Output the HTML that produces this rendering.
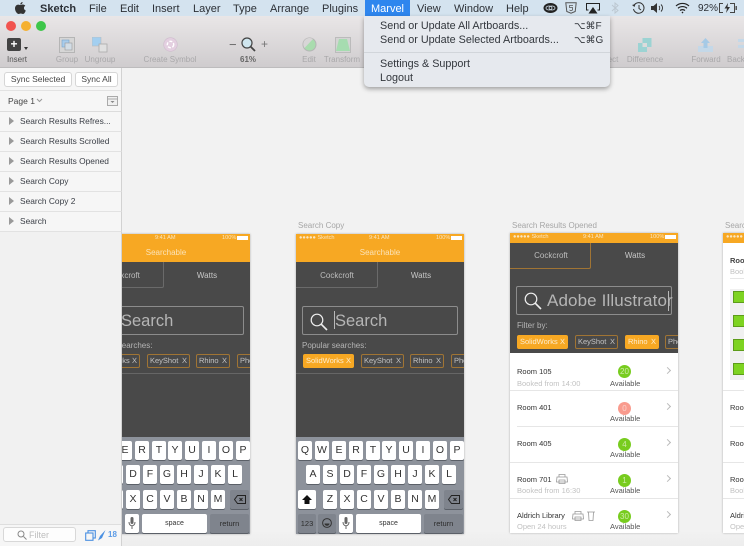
<!DOCTYPE html>
<html><head><meta charset="utf-8"><style>
*{box-sizing:border-box;margin:0;padding:0}
html,body{width:744px;height:546px;overflow:hidden;background:#f2f2f2;font-family:"Liberation Sans",sans-serif}
#root{position:absolute;left:0;top:0;width:744px;height:546px;overflow:hidden;filter:blur(.35px);background:linear-gradient(#f2f2f2 0,#f2f2f2 530px,#ededed 546px)}
.a,.t{position:absolute;white-space:nowrap}
.mb{position:absolute;top:3px;font-size:11px;line-height:12px;color:#2c3036}
.tb{position:absolute;top:55px;font-size:8px;line-height:10px;color:#a9a8aa;transform:translateX(-50%);white-space:nowrap}
.row{position:absolute;left:0;width:122px;height:20px;border-bottom:1px solid #e2e2e2;border-right:1px solid #d2d2d2;background:#f6f6f6;font-size:8.4px;line-height:19px;padding-left:20px;color:#3c4048}
.row:before{content:"";position:absolute;left:9px;top:5px;border-left:5px solid #9a9a9a;border-top:4px solid transparent;border-bottom:4px solid transparent}
.ph{position:absolute;top:234px;width:168px;height:300px;background:#494949;box-shadow:0 0 2px rgba(0,0,0,.3);overflow:hidden}
.st{position:absolute;left:0;top:0;width:168px;height:10px;font-size:5.6px;line-height:9px;color:#fbe6c0;background:#f7a823}
.tag{position:absolute;height:14px;border:1px solid #a07434;border-radius:2px;font-size:7.5px;text-rendering:geometricPrecision;line-height:12px;color:#c3c3c3;padding-left:2px;overflow:hidden;white-space:nowrap}
.tag i{position:absolute;right:2px;top:0;font-style:normal}
.tag.on{background:#f7a823;border-color:#f7a823;color:#fdeccd}
.k{position:absolute;width:14px;height:19px;background:#fff;border-radius:2px;box-shadow:0 1px 0 #5b6068;font-size:10.5px;line-height:19px;text-align:center;color:#333}
.k.d{background:#7f848d;color:#2c2c2c}
.kb{position:absolute;left:0;top:203px;width:168px;height:97px;background:#8d929b}
.rm{position:absolute;left:7px;font-size:7.5px;color:#333;white-space:nowrap;line-height:10px}
.sub{position:absolute;left:7px;font-size:7.5px;color:#c2c2c2;white-space:nowrap;line-height:10px}
.av{position:absolute;left:100px;width:30px;text-align:center;font-size:7.5px;color:#555;line-height:10px}
.dot{position:absolute;left:108px;width:13px;height:13px;border-radius:50%;background:#78cc1f;color:#cdeca8;font-size:8px;line-height:13px;text-align:center}
.chev{position:absolute;left:155px;width:5px;height:5px;border-top:1px solid #bbb;border-right:1px solid #bbb;transform:rotate(45deg)}
.ln{position:absolute;height:1px;background:#e6e6e6}
.lb{position:absolute;top:221px;font-size:8px;line-height:10px;color:#a6a6a6;white-space:nowrap}
.sq{position:absolute;left:10px;width:14px;height:12px;background:#7ed321;border:1px solid #5d9c1a}
.mi{position:absolute;left:16px;font-size:10.8px;line-height:13px;color:#33373d;white-space:nowrap}
.sc{position:absolute;font-size:10px;line-height:13px;color:#33373d;white-space:nowrap}
</style></head><body><div id="root">

<div class="lb" style="left:298px">Search Copy</div>
<div class="lb" style="left:512px">Search Results Opened</div>
<div class="lb" style="left:725px">Search Results Scrolled</div>

<!-- phone 1 -->
<div class="ph" style="left:82px">
<div class="a" style="left:0;top:0;width:168px;height:28px;background:#f7a823"></div>
<div class="st"><span class="t" style="left:3px">●●●●● Sketch</span><span class="t" style="left:73px">9:41 AM</span><span class="t" style="left:140px">100%</span><span class="a" style="left:155px;top:2px;width:11px;height:4px;background:#fff"></span></div>
<div class="t" style="left:0;width:168px;text-align:center;top:14px;font-size:8px;line-height:10px;color:#fbe3b8">Searchable</div>
<div class="a" style="left:0;top:28px;width:82px;height:26px;border-right:1px solid #6a6a6a;border-bottom:1px solid #6a6a6a;border-radius:0 0 2px 0"></div>
<div class="t" style="left:0;width:82px;text-align:center;top:37px;font-size:8px;line-height:10px;color:#bdbdbd">Cockcroft</div>
<div class="t" style="left:82px;width:86px;text-align:center;top:37px;font-size:8px;line-height:10px;color:#c8c8c8">Watts</div>
<div class="a" style="left:6px;top:72px;width:156px;height:29px;border:1px solid #8c8c8c;border-radius:2px"></div>
<div class="t" style="left:39px;top:78px;font-size:16.5px;line-height:19px;color:#b5b5b5">Search</div>
<div class="t" style="left:6px;top:107px;font-size:8px;line-height:10px;color:#b5b5b5">Popular searches:</div>
<div class="tag" style="left:7px;top:120px;width:51px">SolidWorks<i>X</i></div>
<div class="tag" style="left:65px;top:120px;width:43px">KeyShot<i>X</i></div>
<div class="tag" style="left:114px;top:120px;width:34px">Rhino<i>X</i></div>
<div class="tag" style="left:155px;top:120px;width:30px">Photo</div>
<div class="a" style="left:0;top:139px;width:168px;height:1px;background:#666"></div>
<div class="kb">
<div class="k" style="left:2px;top:4px">Q</div><div class="k" style="left:19px;top:4px">W</div><div class="k" style="left:36px;top:4px">E</div><div class="k" style="left:53px;top:4px">R</div><div class="k" style="left:70px;top:4px">T</div><div class="k" style="left:86px;top:4px">Y</div><div class="k" style="left:103px;top:4px">U</div><div class="k" style="left:120px;top:4px">I</div><div class="k" style="left:137px;top:4px">O</div><div class="k" style="left:154px;top:4px">P</div>
<div class="k" style="left:10px;top:28px">A</div><div class="k" style="left:27px;top:28px">S</div><div class="k" style="left:44px;top:28px">D</div><div class="k" style="left:61px;top:28px">F</div><div class="k" style="left:78px;top:28px">G</div><div class="k" style="left:95px;top:28px">H</div><div class="k" style="left:112px;top:28px">J</div><div class="k" style="left:129px;top:28px">K</div><div class="k" style="left:146px;top:28px">L</div>
<div class="k" style="left:27px;top:53px">Z</div><div class="k" style="left:44px;top:53px">X</div><div class="k" style="left:61px;top:53px">C</div><div class="k" style="left:78px;top:53px">V</div><div class="k" style="left:95px;top:53px">B</div><div class="k" style="left:112px;top:53px">N</div><div class="k" style="left:129px;top:53px">M</div>
<div class="k d" style="left:148px;top:53px;width:19px"><svg width="12" height="9" viewBox="0 0 12 9" style="margin-top:5px;display:block;margin-left:3.500px"><path d="M3.500.500h8v8h-8L.500 4.500zM5.500 3l3 3M8.500 3l-3 3" fill="none" stroke="#222"/></svg></div>
<div class="k" style="left:43px;top:77px"><svg width="8" height="14" viewBox="0 0 8 14" style="margin-top:3px"><rect x="2.500" y="0" width="3" height="7" rx="1.500" fill="#666"/><path d="M1 5c0 5 6 5 6 0M4 9v3" stroke="#666" fill="none"/></svg></div>
<div class="k" style="left:60px;top:77px;width:65px;font-size:7px">space</div>
<div class="k d" style="left:128px;top:77px;width:39px;font-size:7.5px">return</div>
</div>
</div>

<!-- phone 2 -->
<div class="ph" style="left:296px">
<div class="a" style="left:0;top:0;width:168px;height:28px;background:#f7a823"></div>
<div class="st"><span class="t" style="left:3px">●●●●● Sketch</span><span class="t" style="left:73px">9:41 AM</span><span class="t" style="left:140px">100%</span><span class="a" style="left:155px;top:2px;width:11px;height:4px;background:#fff"></span></div>
<div class="t" style="left:0;width:168px;text-align:center;top:14px;font-size:8px;line-height:10px;color:#fbe3b8">Searchable</div>
<div class="a" style="left:0;top:28px;width:82px;height:26px;border-right:1px solid #6a6a6a;border-bottom:1px solid #6a6a6a;border-radius:0 0 2px 0"></div>
<div class="t" style="left:0;width:82px;text-align:center;top:37px;font-size:8px;line-height:10px;color:#bdbdbd">Cockcroft</div>
<div class="t" style="left:82px;width:86px;text-align:center;top:37px;font-size:8px;line-height:10px;color:#c8c8c8">Watts</div>
<div class="a" style="left:6px;top:72px;width:156px;height:29px;border:1px solid #8c8c8c;border-radius:2px"></div>
<svg class="a" style="left:14px;top:79px" width="18" height="18" viewBox="0 0 18 18"><circle cx="7" cy="7" r="5.800" fill="none" stroke="#eee" stroke-width="1.200"/><path d="M11.200 11.200L17 17" stroke="#eee" stroke-width="1.600"/></svg>
<div class="a" style="left:38px;top:77px;width:1px;height:18px;background:#b9b9b9"></div>
<div class="t" style="left:39px;top:78px;font-size:16.500px;line-height:19px;color:#b5b5b5">Search</div>
<div class="t" style="left:6px;top:107px;font-size:8px;line-height:10px;color:#b5b5b5">Popular searches:</div>
<div class="tag on" style="left:7px;top:120px;width:51px">SolidWorks<i>X</i></div>
<div class="tag" style="left:65px;top:120px;width:43px">KeyShot<i>X</i></div>
<div class="tag" style="left:114px;top:120px;width:34px">Rhino<i>X</i></div>
<div class="tag" style="left:155px;top:120px;width:30px">Photo</div>
<div class="a" style="left:0;top:139px;width:168px;height:1px;background:#666"></div>
<div class="kb">
<div class="k" style="left:2px;top:4px">Q</div><div class="k" style="left:19px;top:4px">W</div><div class="k" style="left:36px;top:4px">E</div><div class="k" style="left:53px;top:4px">R</div><div class="k" style="left:70px;top:4px">T</div><div class="k" style="left:86px;top:4px">Y</div><div class="k" style="left:103px;top:4px">U</div><div class="k" style="left:120px;top:4px">I</div><div class="k" style="left:137px;top:4px">O</div><div class="k" style="left:154px;top:4px">P</div>
<div class="k" style="left:10px;top:28px">A</div><div class="k" style="left:27px;top:28px">S</div><div class="k" style="left:44px;top:28px">D</div><div class="k" style="left:61px;top:28px">F</div><div class="k" style="left:78px;top:28px">G</div><div class="k" style="left:95px;top:28px">H</div><div class="k" style="left:112px;top:28px">J</div><div class="k" style="left:129px;top:28px">K</div><div class="k" style="left:146px;top:28px">L</div>
<div class="k" style="left:2px;top:53px;width:18px"><svg width="10" height="10" viewBox="0 0 10 10" style="margin-top:5px;display:block;margin-left:4px"><path d="M5 0L10 5H7.500V9H2.500V5H0Z" fill="#111"/></svg></div>
<div class="k" style="left:27px;top:53px">Z</div><div class="k" style="left:44px;top:53px">X</div><div class="k" style="left:61px;top:53px">C</div><div class="k" style="left:78px;top:53px">V</div><div class="k" style="left:95px;top:53px">B</div><div class="k" style="left:112px;top:53px">N</div><div class="k" style="left:129px;top:53px">M</div>
<div class="k d" style="left:148px;top:53px;width:19px"><svg width="12" height="9" viewBox="0 0 12 9" style="margin-top:5px;display:block;margin-left:3.500px"><path d="M3.500.500h8v8h-8L.500 4.500zM5.500 3l3 3M8.500 3l-3 3" fill="none" stroke="#222"/></svg></div>
<div class="k d" style="left:2px;top:77px;width:18px;font-size:7.500px">123</div>
<div class="k d" style="left:22px;top:77px;width:18px"><svg width="10" height="10" viewBox="0 0 10 10" style="margin-top:4px"><circle cx="5" cy="5" r="4.400" fill="none" stroke="#333"/><path d="M2.500 5.500h5c0 3-5 3-5 0z" fill="#333"/></svg></div>
<div class="k" style="left:43px;top:77px"><svg width="8" height="14" viewBox="0 0 8 14" style="margin-top:3px"><rect x="2.500" y="0" width="3" height="7" rx="1.500" fill="#666"/><path d="M1 5c0 5 6 5 6 0M4 9v3" stroke="#666" fill="none"/></svg></div>
<div class="k" style="left:60px;top:77px;width:65px;font-size:7px">space</div>
<div class="k d" style="left:128px;top:77px;width:39px;font-size:7.500px">return</div>
</div>
</div>

<!-- phone 3 -->
<div class="ph" style="left:510px;top:233px;background:#fff">
<div class="a" style="left:0;top:0;width:168px;height:120px;background:#494949"></div>
<div class="st"><span class="t" style="left:3px">●●●●● Sketch</span><span class="t" style="left:73px">9:41 AM</span><span class="t" style="left:140px">100%</span><span class="a" style="left:155px;top:2px;width:11px;height:4px;background:#fff"></span></div>
<div class="a" style="left:0;top:10px;width:81px;height:26px;border-right:1px solid #a07434;border-bottom:1px solid #a07434;border-radius:0 0 2px 0"></div>
<div class="t" style="left:0;width:82px;text-align:center;top:18px;font-size:8px;line-height:10px;color:#bdbdbd">Cockcroft</div>
<div class="t" style="left:82px;width:86px;text-align:center;top:18px;font-size:8px;line-height:10px;color:#c8c8c8">Watts</div>
<div class="a" style="left:6px;top:53px;width:156px;height:29px;border:1px solid #8c8c8c;border-radius:2px"></div>
<svg class="a" style="left:14px;top:59px" width="18" height="18" viewBox="0 0 18 18"><circle cx="7" cy="7" r="5.800" fill="none" stroke="#eee" stroke-width="1.200"/><path d="M11.200 11.200L17 17" stroke="#eee" stroke-width="1.600"/></svg>
<div class="t" style="left:37px;top:58px;font-size:17px;line-height:20px;letter-spacing:.12px;color:#b5b5b5">Adobe Illustrator</div>
<div class="a" style="left:158px;top:58px;width:1px;height:20px;background:#b9b9b9"></div>
<div class="t" style="left:7px;top:88px;font-size:8px;line-height:10px;color:#b5b5b5">Filter by:</div>
<div class="tag on" style="left:7px;top:102px;width:51px">SolidWorks<i>X</i></div>
<div class="tag" style="left:65px;top:102px;width:43px">KeyShot<i>X</i></div>
<div class="tag on" style="left:115px;top:102px;width:34px">Rhino<i>X</i></div>
<div class="tag" style="left:155px;top:102px;width:30px">Photo</div>
<div class="rm" style="top:134px">Room 105</div><div class="sub" style="top:146px">Booked from 14:00</div>
<div class="dot" style="top:132px">20</div><div class="av" style="top:146px">Available</div><div class="chev" style="top:135px"></div>
<div class="ln" style="left:0;top:157px;width:168px"></div>
<div class="rm" style="top:170px">Room 401</div>
<div class="dot" style="top:169px;background:#f99b8e;color:#fbd3cc">0</div><div class="av" style="top:181px">Available</div><div class="chev" style="top:171px"></div>
<div class="ln" style="left:7px;top:193px;width:161px"></div>
<div class="rm" style="top:206px">Room 405</div>
<div class="dot" style="top:205px">4</div><div class="av" style="top:217px">Available</div><div class="chev" style="top:207px"></div>
<div class="ln" style="left:0;top:229px;width:168px"></div>
<div class="rm" style="top:242px">Room 701</div><div class="sub" style="top:253px">Booked from 16:30</div>
<svg class="a" style="left:46px;top:241px" width="12" height="10" viewBox="0 0 12 10"><path d="M3 3V.500h6V3M1 3h10l.500 5H.500zM3 6h6v3.500H3z" fill="none" stroke="#999" stroke-width=".8"/></svg>
<div class="dot" style="top:241px">1</div><div class="av" style="top:253px">Available</div><div class="chev" style="top:243px"></div>
<div class="ln" style="left:0;top:265px;width:168px"></div>
<div class="rm" style="top:278px">Aldrich Library</div><div class="sub" style="top:289px">Open 24 hours</div>
<svg class="a" style="left:62px;top:278px" width="12" height="10" viewBox="0 0 12 10"><path d="M3 3V.500h6V3M1 3h10l.500 5H.500zM3 6h6v3.500H3z" fill="none" stroke="#999" stroke-width=".8"/></svg>
<svg class="a" style="left:77px;top:278px" width="8" height="10" viewBox="0 0 8 10"><path d="M0 1h8M1.500 1l.500 8.500h4l.500-8.500" fill="none" stroke="#999" stroke-width=".8"/></svg>
<div class="dot" style="top:277px">30</div><div class="av" style="top:289px">Available</div><div class="chev" style="top:279px"></div>
</div>

<!-- phone 4 -->
<div class="ph" style="left:723px;top:233px;background:#fff">
<div class="st"><span class="t" style="left:3px">●●●●● Sketch</span></div>
<div class="rm" style="top:23px;font-weight:bold;color:#444">Room 105</div><div class="sub" style="top:34px">Booked from 14:00</div>
<div class="ln" style="left:7px;top:45px;width:161px"></div>
<div class="a" style="left:7px;top:56px;width:160px;height:91px;background:#f0f0f0"></div>
<div class="sq" style="top:58px"></div><div class="sq" style="top:82px"></div><div class="sq" style="top:106px"></div><div class="sq" style="top:130px"></div>
<div class="ln" style="left:0;top:157px;width:168px"></div>
<div class="rm" style="top:170px">Room 401</div><div class="ln" style="left:7px;top:193px;width:161px"></div>
<div class="rm" style="top:206px">Room 405</div><div class="ln" style="left:0;top:229px;width:168px"></div>
<div class="rm" style="top:242px">Room 701</div><div class="sub" style="top:253px">Booked</div><div class="ln" style="left:0;top:265px;width:168px"></div>
<div class="rm" style="top:278px">Aldrich</div><div class="sub" style="top:289px">Open</div>
</div>

<!-- sidebar -->
<div class="a" style="left:0;top:68px;width:122px;height:478px;background:#f1f1f1;border-right:1px solid #d2d2d2">
<div class="a" style="left:0;top:0;width:121px;height:23px;background:#f6f6f6;border-bottom:1px solid #e2e2e2"></div>
<div class="a" style="left:4px;top:4px;width:68px;height:15px;background:#fff;border:1px solid #d6d6d6;border-radius:3px;font-size:8.500px;line-height:13px;text-align:center;color:#444">Sync Selected</div>
<div class="a" style="left:75px;top:4px;width:43px;height:15px;background:#fff;border:1px solid #d6d6d6;border-radius:3px;font-size:8.500px;line-height:13px;text-align:center;color:#444">Sync All</div>
<div class="a" style="left:0;top:23px;width:121px;height:21px;background:#f6f6f6;border-bottom:1px solid #dcdcdc"></div>
<div class="t" style="left:8px;top:28px;font-size:8.500px;line-height:10px;color:#444">Page 1</div>
<svg class="a" style="left:36px;top:30px" width="7" height="5" viewBox="0 0 7 5"><path d="M1 1l2.500 2.500L6 1" fill="none" stroke="#999"/></svg>
<svg class="a" style="left:107px;top:28px" width="11" height="10" viewBox="0 0 11 10"><rect x=".5" y=".5" width="10" height="9" fill="#f0f0f0" stroke="#aaa"/><path d="M0 3h11" stroke="#aaa"/><path d="M3.500 5h4L5.500 7z" fill="#888"/></svg>
</div>
<div class="row" style="top:112px">Search Results Refres...</div>
<div class="row" style="top:132px">Search Results Scrolled</div>
<div class="row" style="top:152px">Search Results Opened</div>
<div class="row" style="top:172px">Search Copy</div>
<div class="row" style="top:192px">Search Copy 2</div>
<div class="row" style="top:212px">Search</div>
<div class="a" style="left:0;top:524px;width:122px;height:22px;background:#f6f6f6;border-top:1px solid #dedede;border-right:1px solid #d2d2d2"></div>
<div class="a" style="left:3px;top:527px;width:73px;height:15px;background:#fdfdfd;border:1px solid #d8d8d8;border-radius:3px"></div>
<svg class="a" style="left:17px;top:530px" width="10" height="10" viewBox="0 0 10 10"><circle cx="4" cy="4" r="3" fill="none" stroke="#888"/><path d="M6.500 6.500L9.500 9.500" stroke="#888"/></svg>
<div class="t" style="left:29px;top:530px;font-size:9px;line-height:10px;color:#bdbdbd">Filter</div>
<svg class="a" style="left:85px;top:530px" width="11" height="11" viewBox="0 0 11 11"><rect x="3" y=".7" width="7.300" height="7.300" fill="none" stroke="#4a90e2" stroke-width="1.100"/><rect x=".7" y="3" width="7.300" height="7.300" fill="#f6f6f6" stroke="#4a90e2" stroke-width="1.100"/></svg>
<svg class="a" style="left:97px;top:530px" width="9" height="11" viewBox="0 0 9 11"><path d="M8.500 0L3 6 1 10.500 5 8z" fill="#4a90e2"/></svg>
<div class="t" style="left:108px;top:530px;font-size:8px;line-height:10px;font-weight:bold;color:#5b9be6">18</div>

<!-- toolbar -->
<div class="a" style="left:0;top:16px;width:744px;height:52px;background:linear-gradient(#e9e6e7,#cfccce);border-bottom:1px solid #bdbcbd"></div>
<div class="a" style="left:6px;top:20.500px;width:10px;height:10px;border-radius:50%;background:#f1534e"></div>
<div class="a" style="left:20.500px;top:20.500px;width:10px;height:10px;border-radius:50%;background:#f5b030"></div>
<div class="a" style="left:35.500px;top:20.500px;width:10px;height:10px;border-radius:50%;background:#3ec64a"></div>
<div class="a" style="left:7px;top:38px;width:14px;height:13px;background:#434343;border-radius:2px;color:#fff;font-size:12px;line-height:12px;text-align:center;font-weight:bold">+</div>
<div class="a" style="left:24px;top:47px;border-top:3px solid #333;border-left:2px solid transparent;border-right:2px solid transparent"></div>
<div class="tb" style="left:17px;color:#555">Insert</div>
<svg class="a" style="left:59px;top:37px" width="16" height="16" viewBox="0 0 16 16"><rect x=".5" y=".5" width="15" height="15" fill="#d6d6d6" stroke="#b5b5b5"/><rect x="3" y="3" width="7" height="7" fill="#a8ccec" stroke="#7ba3c8" stroke-width=".6"/><rect x="6" y="6" width="7" height="7" fill="#d2dde6" stroke="#999" stroke-width=".6"/></svg>
<div class="tb" style="left:67px">Group</div>
<svg class="a" style="left:92px;top:37px" width="16" height="16" viewBox="0 0 16 16"><rect x="0" y="0" width="9" height="9" fill="#a3cff0" stroke="#bbb" stroke-width=".6"/><rect x="7" y="7" width="8" height="8" fill="#e0e0e0" stroke="#aaa" stroke-width=".8"/></svg>
<div class="tb" style="left:100px">Ungroup</div>
<svg class="a" style="left:163px;top:37px" width="15" height="15" viewBox="0 0 15 15"><circle cx="7.500" cy="7.500" r="6.800" fill="#e3cfe0" stroke="#cfbccd" stroke-width=".6"/><circle cx="7.500" cy="7.500" r="3.200" fill="none" stroke="#fff" stroke-width="1.400" stroke-dasharray="3 1.500"/></svg>
<div class="tb" style="left:170px">Create Symbol</div>
<div class="t" style="left:229px;top:38px;font-size:13px;line-height:13px;color:#666">−</div>
<svg class="a" style="left:241px;top:37px" width="15" height="15" viewBox="0 0 15 15"><circle cx="6" cy="6" r="5" fill="#cfe5ee" stroke="#444" stroke-width="1.200"/><path d="M9.500 9.500L14 14" stroke="#444" stroke-width="1.800"/></svg>
<div class="t" style="left:261px;top:38px;font-size:12px;line-height:13px;color:#777">+</div>
<div class="tb" style="left:248px;font-weight:bold;color:#666">61%</div>
<svg class="a" style="left:302px;top:37px" width="15" height="15" viewBox="0 0 15 15"><circle cx="7.500" cy="7.500" r="6.500" fill="#a9dcae" stroke="#b5b5b5"/><path d="M2.800 3A6.500 6.500 0 0 1 11 2L2.500 11A6.500 6.500 0 0 1 2.800 3z" fill="#d8d6d7"/></svg>
<div class="tb" style="left:309px">Edit</div>
<svg class="a" style="left:335px;top:37px" width="16" height="16" viewBox="0 0 16 16"><rect x=".5" y=".5" width="15" height="15" fill="#d4d4d4" stroke="#bbb"/><path d="M4 2h8l3 12H1z" fill="#a6dcb0"/></svg>
<div class="tb" style="left:342px">Transform</div>
<div class="tb" style="left:613px">ect</div>
<svg class="a" style="left:638px;top:38px" width="14" height="14" viewBox="0 0 14 14"><rect x="4.500" y="0" width="9" height="9" fill="#9cd3d3"/><rect x="0" y="5" width="9" height="9" fill="#9cd3d3"/><rect x="4.500" y="5" width="4.500" height="4" fill="#dcdcdc"/></svg>
<div class="tb" style="left:645px">Difference</div>
<svg class="a" style="left:698px;top:38px" width="15" height="14" viewBox="0 0 15 14"><rect x="0" y="8" width="15" height="6" fill="#c4d8e8"/><path d="M7.500 0L12 5H9.500v5h-4V5H3z" fill="#a6cae6"/></svg>
<div class="tb" style="left:706px">Forward</div>
<svg class="a" style="left:738px;top:38px" width="10" height="14" viewBox="0 0 10 14"><rect x="0" y="1" width="10" height="3" fill="#c4d8e8"/><rect x="0" y="7" width="10" height="3" fill="#c4d8e8"/></svg>
<div class="t" style="left:727px;top:55px;font-size:8px;line-height:10px;color:#a9a8aa">Backward</div>

<!-- menu bar -->
<div class="a" style="left:0;top:0;width:744px;height:16px;background:#d4e3ef"></div>
<svg class="a" style="left:15px;top:2px" width="11" height="12" viewBox="0 0 11 12"><path d="M7.600 0c.1 1-.9 2.500-2.300 2.500C5.200 1.300 6.300.1 7.600 0zM5.400 3c.7 0 1.300-.5 2.400-.5 1 0 1.900.5 2.500 1.300-2 1.200-1.700 3.900.5 4.800C10.200 10 9.200 12 8 12c-.8 0-1.200-.5-2.200-.5-1 0-1.400.5-2.200.5C2.200 12 0 9.300 0 6.500 0 4 1.600 2.600 3.200 2.600c.9 0 1.700.4 2.200.4z" fill="#333"/></svg>
<div class="mb" style="left:40px;font-weight:bold">Sketch</div>
<div class="mb" style="left:89px">File</div>
<div class="mb" style="left:120px">Edit</div>
<div class="mb" style="left:152px">Insert</div>
<div class="mb" style="left:193px">Layer</div>
<div class="mb" style="left:233px">Type</div>
<div class="mb" style="left:270px">Arrange</div>
<div class="mb" style="left:322px">Plugins</div>
<div class="a" style="left:365px;top:0;width:45px;height:16px;background:#2e86ee"></div>
<div class="mb" style="left:371px;color:#fff">Marvel</div>
<div class="mb" style="left:417px">View</div>
<div class="mb" style="left:454px">Window</div>
<div class="mb" style="left:506px">Help</div>
<svg class="a" style="left:543px;top:2px" width="15" height="12" viewBox="0 0 15 12"><ellipse cx="7.500" cy="6" rx="7" ry="5" fill="#222"/><ellipse cx="6" cy="6" rx="3" ry="2" fill="none" stroke="#d4e3ef" stroke-width=".8"/><ellipse cx="9" cy="6" rx="3" ry="2" fill="none" stroke="#d4e3ef" stroke-width=".8"/></svg>
<svg class="a" style="left:565px;top:2px" width="12" height="12" viewBox="0 0 12 12"><path d="M.8.800h10.400l-1 8.700L6 11.200 1.800 9.500z" fill="none" stroke="#555"/><path d="M8 3.500H4.500v2H7.500V8L6 8.700 4.500 8" fill="none" stroke="#555" stroke-width=".8"/></svg>
<svg class="a" style="left:586px;top:3px" width="14" height="11" viewBox="0 0 14 11"><path d="M2.500 7H.5V.5h13V7h-2" fill="none" stroke="#222"/><path d="M7 4l4.500 6.500h-9z" fill="#222"/></svg>
<svg class="a" style="left:611px;top:2px" width="8" height="12" viewBox="0 0 8 12"><path d="M1 3l6 5.500-3 2.500V1l3 2.500L1 9" fill="none" stroke="#bcc7d0"/></svg>
<svg class="a" style="left:632px;top:2px" width="13" height="12" viewBox="0 0 13 12"><path d="M2 3.500A5.300 5.300 0 1 1 1.500 7" fill="none" stroke="#333"/><path d="M0 3l2.500 2 1-3z" fill="#333"/><path d="M7 3v3.500l2 1.500" fill="none" stroke="#333"/></svg>
<svg class="a" style="left:651px;top:3px" width="14" height="10" viewBox="0 0 14 10"><path d="M0 3h2.500L6 0v10L2.500 7H0z" fill="#333"/><path d="M8 3c1 1 1 3 0 4M10 1.500c2 2 2 5 0 7" fill="none" stroke="#333" stroke-width=".9"/></svg>
<svg class="a" style="left:675px;top:2px" width="15" height="12" viewBox="0 0 15 12"><path d="M1 4c3.600-3.400 9.400-3.400 13 0M3 6.300c2.500-2.300 6.500-2.300 9 0M5 8.500c1.400-1.200 3.600-1.200 5 0" fill="none" stroke="#222" stroke-width="1.200"/><path d="M6.500 10.500l1-1 1 1-1 1z" fill="#222"/></svg>
<div class="mb" style="left:698px;top:3px;font-size:10px">92%</div>
<svg class="a" style="left:719px;top:3px" width="18" height="10" viewBox="0 0 18 10"><path d="M4 .5H.5v9H4M11 .5h4.500v9H11" fill="none" stroke="#444"/><path d="M9 0L5.500 5.500H8L7 10l4-6H8.500z" fill="#333"/><rect x="16.500" y="3" width="1.500" height="4" fill="#555"/></svg>

<!-- dropdown -->
<div class="a" style="left:364px;top:16px;width:246px;height:71px;background:#e6e9ee;border-radius:0 0 5px 5px;box-shadow:0 2px 5px rgba(0,0,0,.35)">
<div class="mi" style="top:4px">Send or Update All Artboards...</div>
<div class="sc" style="left:210px;top:4px">⌥⌘F</div>
<div class="mi" style="top:18px">Send or Update Selected Artboards...</div>
<div class="sc" style="left:210px;top:18px">⌥⌘G</div>
<div class="a" style="left:0;top:36px;width:246px;height:1px;background:#d1d5da"></div>
<div class="mi" style="top:42px">Settings &amp; Support</div>
<div class="mi" style="top:56px">Logout</div>
</div>

</div></body></html>
